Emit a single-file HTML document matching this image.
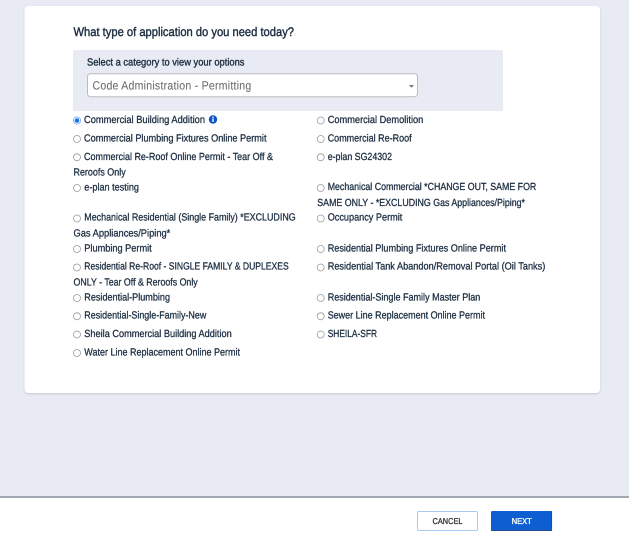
<!DOCTYPE html>
<html lang="en"><head><meta charset="utf-8"><title>Application type</title>
<style>
html,body{margin:0;padding:0;background:#e8ebf3}
svg{display:block;filter:blur(.3px)}
text{font-family:"Liberation Sans",sans-serif;font-size:10.3px;fill:#1d2f42;stroke:#1d2f42;stroke-width:.3px;text-rendering:geometricPrecision}
.r{fill:#fff;stroke:#9a9a9a;stroke-width:.8}
</style></head><body>
<svg width="629" height="536" viewBox="0 0 629 536" xmlns="http://www.w3.org/2000/svg">
<defs>
<filter id="s" x="-5%" y="-5%" width="110%" height="110%"><feDropShadow dx="0" dy="1" stdDeviation="1" flood-color="#000" flood-opacity=".14"/></filter>
</defs>
<rect width="629" height="536" fill="#e8ebf3"/>
<rect x="24.5" y="6" width="575.5" height="387" rx="4" fill="#fff" filter="url(#s)"/>
<text x="73.5" y="36" textLength="220.5" lengthAdjust="spacingAndGlyphs" style="font-size:12.5px;stroke-width:.42px">What type of application do you need today?</text>
<rect x="73" y="50" width="430" height="61" rx="1.5" fill="#e8ebf3"/>
<text x="87" y="65.5" textLength="157.5" lengthAdjust="spacingAndGlyphs" style="stroke-width:.36px">Select a category to view your options</text>
<rect x="87.5" y="73.7" width="330" height="23" rx="3" fill="#fff" stroke="#bcbcbc" stroke-width="1"/>
<text x="92.5" y="89.5" textLength="159" lengthAdjust="spacingAndGlyphs" style="font-size:12px;fill:#6f6f6f;stroke:#6f6f6f;stroke-width:.1px;letter-spacing:.3px">Code Administration - Permitting</text>
<path d="M409 85h5l-2.500 2.800z" fill="#777"/>

<circle cx="77" cy="120.500" r="3.600" fill="#fff" stroke="#7fb0f0" stroke-width=".9"/><circle cx="77" cy="120.500" r="2.300" fill="#1a73e8"/>
<text x="84" y="123" textLength="121" lengthAdjust="spacingAndGlyphs">Commercial Building Addition</text>
<circle cx="213" cy="119.500" r="4.200" fill="#0d55c4"/><rect x="212.300" y="118.500" width="1.400" height="3.400" fill="#fff"/><rect x="212.300" y="116.600" width="1.400" height="1.300" fill="#fff"/>

<circle class="r" cx="77" cy="139" r="3.500"/>
<text x="84" y="141.500" textLength="182.500" lengthAdjust="spacingAndGlyphs">Commercial Plumbing Fixtures Online Permit</text>
<circle class="r" cx="77" cy="157.300" r="3.500"/>
<text x="84" y="160" textLength="189" lengthAdjust="spacingAndGlyphs">Commercial Re-Roof Online Permit - Tear Off &amp;</text>
<text x="73.500" y="175.300" textLength="52.200" lengthAdjust="spacingAndGlyphs">Reroofs Only</text>
<circle class="r" cx="77" cy="188" r="3.500"/>
<text x="84.300" y="190.500" textLength="54.700" lengthAdjust="spacingAndGlyphs">e-plan testing</text>
<circle class="r" cx="77" cy="218.500" r="3.500"/>
<text x="84.300" y="220.700" textLength="211.400" lengthAdjust="spacingAndGlyphs">Mechanical Residential (Single Family) *EXCLUDING</text>
<text x="73.500" y="236.300" textLength="96.800" lengthAdjust="spacingAndGlyphs">Gas Appliances/Piping*</text>
<circle class="r" cx="77" cy="249" r="3.500"/>
<text x="84.300" y="251.300" textLength="67.400" lengthAdjust="spacingAndGlyphs">Plumbing Permit</text>
<circle class="r" cx="77" cy="267.500" r="3.500"/>
<text x="84.300" y="269.700" textLength="204.400" lengthAdjust="spacingAndGlyphs">Residential Re-Roof - SINGLE FAMILY &amp; DUPLEXES</text>
<text x="73.500" y="285.300" textLength="124.200" lengthAdjust="spacingAndGlyphs">ONLY - Tear Off &amp; Reroofs Only</text>
<circle class="r" cx="77" cy="298" r="3.500"/>
<text x="84.300" y="300.300" textLength="85.700" lengthAdjust="spacingAndGlyphs">Residential-Plumbing</text>
<circle class="r" cx="77" cy="316.300" r="3.500"/>
<text x="84.300" y="318.700" textLength="122" lengthAdjust="spacingAndGlyphs">Residential-Single-Family-New</text>
<circle class="r" cx="77" cy="334.500" r="3.500"/>
<text x="84.300" y="337" textLength="147.400" lengthAdjust="spacingAndGlyphs">Sheila Commercial Building Addition</text>
<circle class="r" cx="77" cy="353" r="3.500"/>
<text x="84.300" y="355.300" textLength="155.700" lengthAdjust="spacingAndGlyphs">Water Line Replacement Online Permit</text>

<circle class="r" cx="320.700" cy="120.500" r="3.500"/>
<text x="327.700" y="123" textLength="95.600" lengthAdjust="spacingAndGlyphs">Commercial Demolition</text>
<circle class="r" cx="320.700" cy="139" r="3.500"/>
<text x="327.700" y="141.500" textLength="84" lengthAdjust="spacingAndGlyphs">Commercial Re-Roof</text>
<circle class="r" cx="320.700" cy="157.300" r="3.500"/>
<text x="327.700" y="160" textLength="64.300" lengthAdjust="spacingAndGlyphs">e-plan SG24302</text>
<circle class="r" cx="320.700" cy="188" r="3.500"/>
<text x="327.700" y="190" textLength="208.600" lengthAdjust="spacingAndGlyphs">Mechanical Commercial *CHANGE OUT, SAME FOR</text>
<text x="317.300" y="206" textLength="207.700" lengthAdjust="spacingAndGlyphs">SAME ONLY - *EXCLUDING Gas Appliances/Piping*</text>
<circle class="r" cx="320.700" cy="218.500" r="3.500"/>
<text x="327.700" y="220.700" textLength="74.600" lengthAdjust="spacingAndGlyphs">Occupancy Permit</text>
<circle class="r" cx="320.700" cy="249" r="3.500"/>
<text x="327.700" y="251.300" textLength="178.300" lengthAdjust="spacingAndGlyphs">Residential Plumbing Fixtures Online Permit</text>
<circle class="r" cx="320.700" cy="267.500" r="3.500"/>
<text x="327.700" y="269.700" textLength="217.600" lengthAdjust="spacingAndGlyphs">Residential Tank Abandon/Removal Portal (Oil Tanks)</text>
<circle class="r" cx="320.700" cy="298" r="3.500"/>
<text x="327.700" y="300.300" textLength="152.600" lengthAdjust="spacingAndGlyphs">Residential-Single Family Master Plan</text>
<circle class="r" cx="320.700" cy="316.300" r="3.500"/>
<text x="327.700" y="318.700" textLength="157.300" lengthAdjust="spacingAndGlyphs">Sewer Line Replacement Online Permit</text>
<circle class="r" cx="320.700" cy="334.500" r="3.500"/>
<text x="327.700" y="337" textLength="49.300" lengthAdjust="spacingAndGlyphs">SHEILA-SFR</text>

<rect x="0" y="496" width="629" height="2" fill="#a4a8b3"/>
<rect x="0" y="498" width="629" height="38" fill="#fff"/>
<rect x="417.500" y="511.500" width="60" height="19" rx="1.500" fill="#fff" stroke="#a9c8f3"/>
<text x="432.500" y="524" textLength="30" lengthAdjust="spacingAndGlyphs" style="font-size:8.500px;fill:#333;stroke:#333;stroke-width:.3px">CANCEL</text>
<rect x="491" y="511" width="61" height="20" rx="1.500" fill="#0d5ed1"/>
<path d="M491 530.500h61M551.700 511v20" stroke="#2c4a77" stroke-width=".7" fill="none"/>
<text x="511.700" y="524" textLength="20" lengthAdjust="spacingAndGlyphs" style="font-size:8.500px;fill:#fff;stroke:#fff;stroke-width:.35px">NEXT</text>
</svg>
</body></html>
